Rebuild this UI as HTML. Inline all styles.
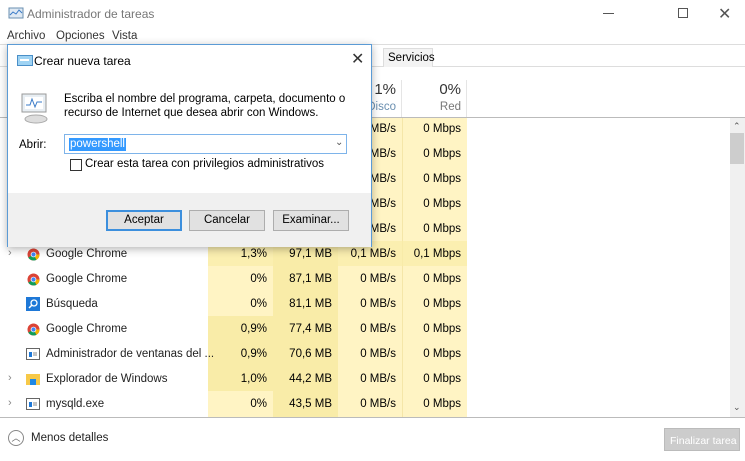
<!DOCTYPE html><html><head><meta charset="utf-8"><style>
*{margin:0;padding:0;box-sizing:border-box}
body{width:745px;height:461px;overflow:hidden;background:#fff;font-family:"Liberation Sans",sans-serif;font-size:11.5px;color:#000;position:relative}
.a{position:absolute;white-space:nowrap}
.r{text-align:right}
.g{color:#777}
</style></head><body>
<svg class="a" style="left:8px;top:7px" width="16" height="14"><rect x="1" y="1" width="14" height="10" fill="#dfe9f3" stroke="#6a8fb0"/><path d="M2 8 L5 5 L8 7 L11 3 L14 6" stroke="#3a7bc8" fill="none"/></svg>
<div class="a g" style="left:27px;top:7px;font-size:12px">Administrador de tareas</div>
<div class="a" style="left:603px;top:13px;width:11px;height:1px;background:#555"></div>
<div class="a" style="left:678px;top:8px;width:10px;height:10px;border:1px solid #555"></div>
<div class="a" style="left:718px;top:4px;font-size:16px;color:#555">✕</div>
<div class="a" style="left:7px;top:30px;color:#333">Archivo</div>
<div class="a" style="left:56px;top:30px;color:#333">Opciones</div>
<div class="a" style="left:112px;top:30px;color:#333">Vista</div>
<div class="a" style="left:0;top:44px;width:745px;height:1px;background:#ddd"></div>
<div class="a" style="left:0;top:66px;width:745px;height:1px;background:#ddd"></div>
<div class="a" style="left:383px;top:48px;width:50px;height:19px;background:#f3f3f3;border:1px solid #ddd;border-bottom:none;padding:3px 0 0 4px">Servicios</div>
<div class="a r" style="left:338px;top:81px;width:58px;font-size:15px;color:#333">1%</div>
<div class="a r g" style="left:338px;top:101px;width:58px;color:#6a8fb0">Disco</div>
<div class="a r" style="left:402px;top:81px;width:59px;font-size:15px;color:#333">0%</div>
<div class="a r g" style="left:402px;top:101px;width:59px">Red</div>
<div class="a" style="left:401px;top:80px;width:1px;height:37px;background:#e5e5e5"></div>
<div class="a" style="left:466px;top:80px;width:1px;height:37px;background:#e5e5e5"></div>
<div class="a" style="left:0;top:117px;width:745px;height:1px;background:#bbb"></div>
<div class="a" style="left:208px;top:118px;width:65px;height:299px;background:#fff4c4"></div>
<div class="a" style="left:273px;top:118px;width:65px;height:299px;background:#f9eca8"></div>
<div class="a" style="left:338px;top:118px;width:64px;height:299px;background:#fff4c4"></div>
<div class="a" style="left:402px;top:118px;width:65px;height:299px;background:#fff4c4;border-left:1px solid #f5e6a8"></div>
<div class="a" style="left:208px;top:241px;width:259px;height:25px;background:#f9eca8;opacity:.7"></div>
<div class="a" style="left:208px;top:316px;width:65px;height:25px;background:#f9eca8"></div>
<div class="a" style="left:208px;top:341px;width:65px;height:25px;background:#f9eca8"></div>
<div class="a" style="left:208px;top:366px;width:65px;height:25px;background:#f9eca8"></div>
<div id="rows"></div>
<div class="a" style="left:730px;top:118px;width:15px;height:299px;background:#f0f0f0"></div>
<div class="a" style="left:733px;top:121px;font-size:9px;color:#555">⌃</div>
<div class="a" style="left:730px;top:133px;width:14px;height:31px;background:#cdcdcd"></div>
<div class="a" style="left:733px;top:402px;font-size:9px;color:#555">⌄</div>
<div class="a" style="left:0;top:417px;width:745px;height:1px;background:#bbb"></div>
<div class="a" style="left:8px;top:430px;width:16px;height:16px;border:1px solid #888;border-radius:50%;font-size:9px;text-align:center;line-height:14px;color:#666">︿</div>
<div class="a" style="left:31px;top:432px;color:#222">Menos detalles</div>
<div class="a" style="left:664px;top:428px;width:76px;height:23px;background:#ccc;border:1px solid #bbb;color:#fff;padding:6px 0 0 5px;font-size:10.5px;overflow:hidden">Finalizar tarea</div>
<div class="a" style="left:7px;top:44px;width:365px;height:203px;background:#fff;border:1px solid #5b9bd5;box-shadow:0 2px 8px rgba(0,0,0,.3)">
 <svg class="a" style="left:9px;top:10px" width="16" height="11"><rect x="0.5" y="0.5" width="15" height="10" fill="#9fd3f3" stroke="#4a8fc8"/><rect x="3" y="4" width="9" height="2" fill="#fff"/></svg>
 <div class="a" style="left:26px;top:9px;font-size:12px">Crear nueva tarea</div>
 <div class="a" style="left:343px;top:4px;font-size:16px;color:#333">✕</div>
 <svg class="a" style="left:10px;top:46px" width="32" height="34"><rect x="4" y="3" width="24" height="18" fill="#e8eef3" stroke="#999"/><rect x="7" y="6" width="18" height="12" fill="#fff"/><path d="M8 14 L12 14 L14 8 L17 16 L19 11 L24 11" stroke="#3a7bc8" fill="none"/><ellipse cx="18" cy="28" rx="11" ry="4" fill="#ddd" stroke="#aaa"/></svg>
 <div class="a" style="left:56px;top:48px;line-height:13.5px">Escriba el nombre del programa, carpeta, documento o<br>recurso de Internet que desea abrir con Windows.</div>
 <div class="a" style="left:11px;top:94px">Abrir:</div>
 <div class="a" style="left:56px;top:89px;width:283px;height:20px;border:1px solid #7eb4ea"></div>
 <div class="a" style="left:61px;top:93px;background:#3399ff;color:#fff;padding:0 1px;height:13px;line-height:13px">powershell</div>
 <div class="a" style="left:327px;top:92px;color:#555;font-size:10px">⌄</div>
 <div class="a" style="left:62px;top:114px;width:12px;height:12px;border:1px solid #333"></div>
 <div class="a" style="left:77px;top:113px">Crear esta tarea con privilegios administrativos</div>
 <div class="a" style="left:0;top:148px;width:363px;height:54px;background:#f0f0f0"></div>
 <div class="a" style="left:98px;top:165px;width:76px;height:21px;background:#e1e1e1;border:2px solid #3c8fdd;text-align:center;line-height:17px">Aceptar</div>
 <div class="a" style="left:181px;top:165px;width:76px;height:21px;background:#e1e1e1;border:1px solid #adadad;text-align:center;line-height:19px">Cancelar</div>
 <div class="a" style="left:265px;top:165px;width:76px;height:21px;background:#e1e1e1;border:1px solid #adadad;text-align:center;line-height:19px">Examinar...</div>
</div>
<script>
var rows=[
["Google Chrome","c",1,"1,3%","97,1 MB","0,1 MB/s","0,1 Mbps"],
["Google Chrome","c",0,"0%","87,1 MB","0 MB/s","0 Mbps"],
["Búsqueda","s",0,"0%","81,1 MB","0 MB/s","0 Mbps"],
["Google Chrome","c",0,"0,9%","77,4 MB","0 MB/s","0 Mbps"],
["Administrador de ventanas del ...","w",0,"0,9%","70,6 MB","0 MB/s","0 Mbps"],
["Explorador de Windows","f",1,"1,0%","44,2 MB","0 MB/s","0 Mbps"],
["mysqld.exe","w",1,"0%","43,5 MB","0 MB/s","0 Mbps"]];
var h="";
for(var i=0;i<5;i++){var y=123+i*25;h+='<div class="a r" style="left:338px;top:'+y+'px;width:58px">MB/s</div><div class="a r" style="left:402px;top:'+y+'px;width:59px">0 Mbps</div>';}
rows.forEach(function(r,i){var y=248+i*25;
if(r[2])h+='<div class="a" style="left:8px;top:'+(y-1)+'px;color:#888;font-size:11px">›</div>';
var ic;
if(r[1]=="c")ic='<svg class="a" style="left:27px;top:'+(y)+'px" width="13" height="13"><circle cx="6.5" cy="6.5" r="6" fill="#db4437"/><path d="M6.5 6.5 L1.3 9.5 A6 6 0 0 0 9.5 11.7Z" fill="#0f9d58"/><path d="M6.5 6.5 L9.5 11.7 A6 6 0 0 0 12.5 6.5 L6.5 6.5Z" fill="#f4b400"/><circle cx="6.5" cy="6.5" r="2.8" fill="#fff"/><circle cx="6.5" cy="6.5" r="2.1" fill="#4285f4"/></svg>';
else if(r[1]=="s")ic='<svg class="a" style="left:26px;top:'+(y-1)+'px" width="14" height="14"><rect width="14" height="14" fill="#1e78d7"/><circle cx="8" cy="6" r="3" stroke="#fff" fill="none" stroke-width="1.3"/><path d="M6 8 L3 11" stroke="#fff" stroke-width="1.5"/></svg>';
else if(r[1]=="f")ic='<svg class="a" style="left:26px;top:'+(y-1)+'px" width="14" height="14"><rect x="0" y="2" width="14" height="11" fill="#f7c948"/><rect x="4" y="7" width="6" height="6" fill="#1e88e5"/></svg>';
else ic='<svg class="a" style="left:26px;top:'+(y)+'px" width="14" height="12"><rect x="0.5" y="0.5" width="13" height="11" fill="#fff" stroke="#666"/><rect x="3" y="4" width="3" height="5" fill="#1e78d7"/><path d="M7 5h4M7 7h4" stroke="#888"/></svg>';
h+=ic+'<div class="a" style="left:46px;top:'+y+'px;color:#222">'+r[0]+'</div>';
h+='<div class="a r" style="left:208px;top:'+y+'px;width:59px">'+r[3]+'</div>';
h+='<div class="a r" style="left:273px;top:'+y+'px;width:59px">'+r[4]+'</div>';
h+='<div class="a r" style="left:338px;top:'+y+'px;width:58px">'+r[5]+'</div>';
h+='<div class="a r" style="left:402px;top:'+y+'px;width:59px">'+r[6]+'</div>';});
document.getElementById("rows").innerHTML=h;
</script>
</body></html>
